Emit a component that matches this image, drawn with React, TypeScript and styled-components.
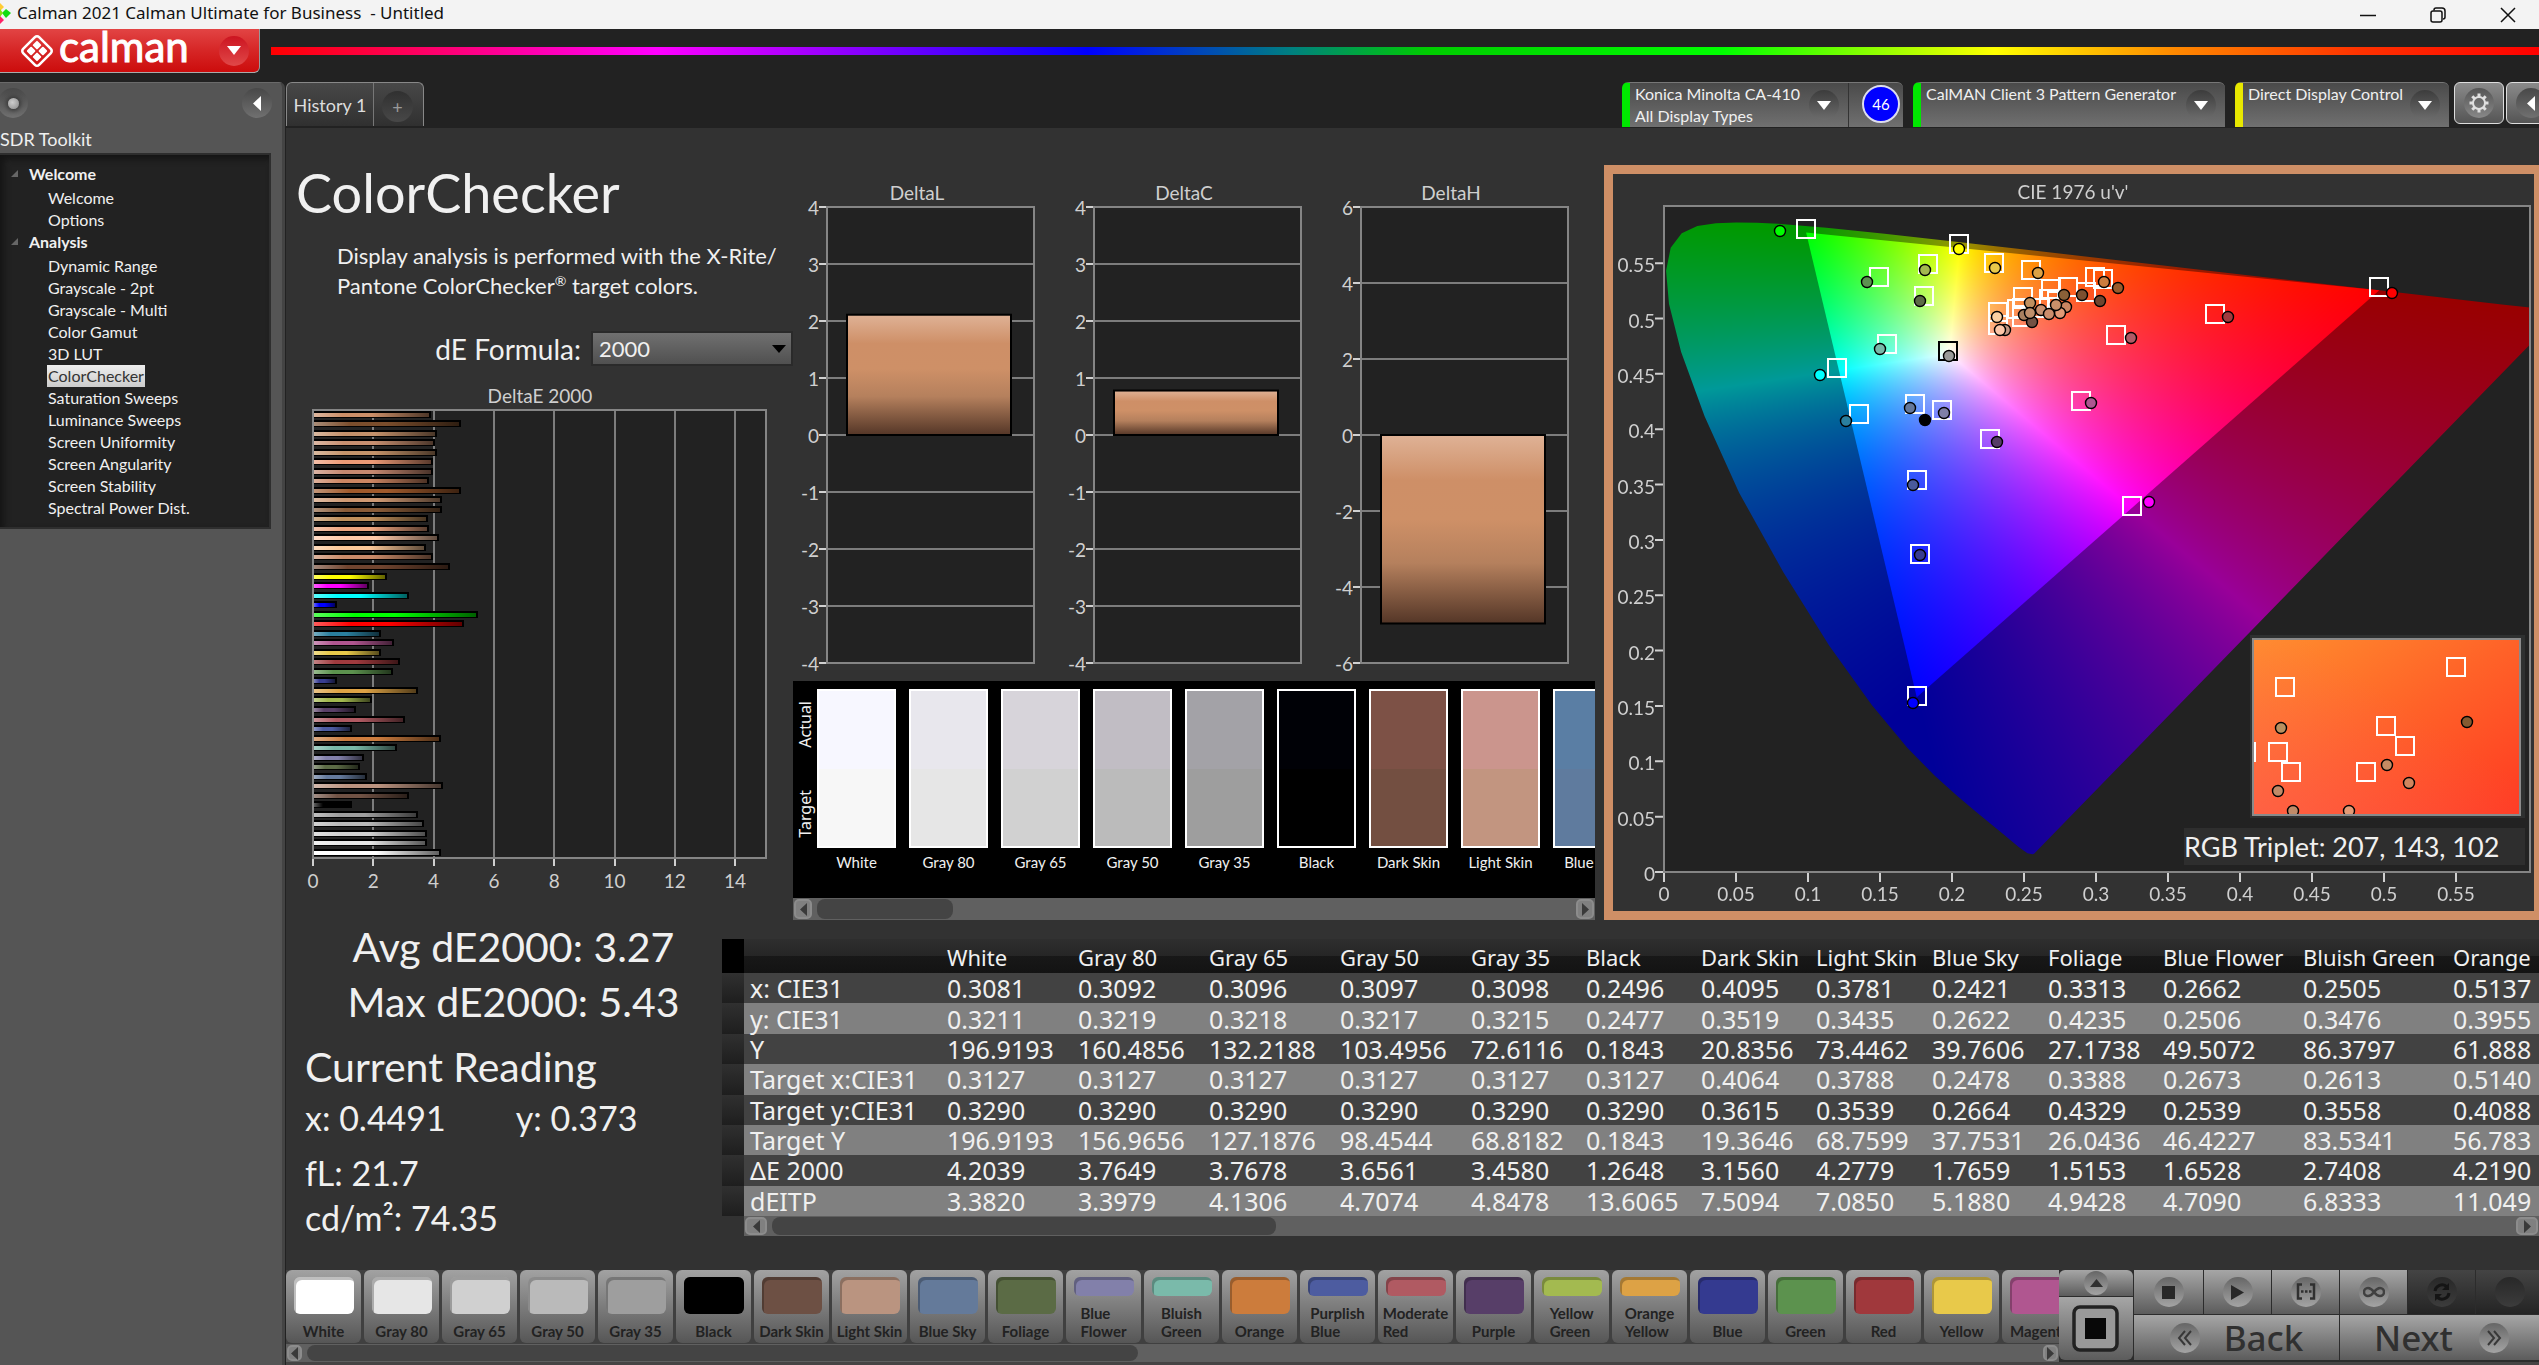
import React, { useLayoutEffect, useRef } from 'react';
import styled, { createGlobalStyle } from 'styled-components';

const UI = 'Lato, "Open Sans", sans-serif';
const WIDE = '"Noto Sans", "Open Sans", sans-serif';

const GlobalStyle = createGlobalStyle`
  *, *::before, *::after { box-sizing: border-box; }
  body { margin: 0; background: #222; color: #f0f0f0; font-family: ${UI}; overflow: hidden; }
  button, select { font-family: inherit; margin: 0; }
  button { padding: 0; cursor: pointer; }
`;

/* ---------- data ---------- */

const NAV = [
  { title: 'Welcome', items: ['Welcome', 'Options'] },
  {
    title: 'Analysis',
    items: [
      'Dynamic Range', 'Grayscale - 2pt', 'Grayscale - Multi', 'Color Gamut', '3D LUT', 'ColorChecker',
      'Saturation Sweeps', 'Luminance Sweeps', 'Screen Uniformity', 'Screen Angularity', 'Screen Stability',
      'Spectral Power Dist.',
    ],
  },
];

const DELTA_E: [number, string][] = [
  [3.88, '#cc8f68'], [4.88, '#7a4d2c'], [4.09, '#c4916b'], [4.02, '#c78f70'], [4.09, '#c4936a'], [3.96, '#ec9a76'],
  [3.96, '#c58870'], [3.83, '#cc8562'], [4.88, '#a05a2c'], [4.25, '#cf9a74'], [4.25, '#8a5c38'], [3.79, '#c0905c'],
  [3.82, '#f0a680'], [4.15, '#ffc9a8'], [3.72, '#fcc898'], [3.96, '#c98a68'], [4.52, '#70442f'], [2.43, '#ffff00'],
  [1.83, '#ff00ff'], [3.16, '#00ffff'], [0.77, '#0000ff'], [5.43, '#00ff00'], [4.98, '#ff0000'], [2.23, '#2a7f9e'],
  [2.66, '#b05690'], [2.23, '#e8c94a'], [2.86, '#a03a3e'], [2.63, '#5c924e'], [0.77, '#383d92'], [3.46, '#dda245'],
  [1.92, '#a3b84f'], [1.4, '#5a4068'], [3.02, '#b05a62'], [1.26, '#4d5ca2'], [4.22, '#cc7c3e'], [2.74, '#78b8a8'],
  [1.65, '#8280aa'], [1.51, '#5c6b46'], [1.76, '#647a9c'], [4.28, '#bc9480'], [3.15, '#705244'], [1.26, '#000000'],
  [3.46, '#9e9e9e'], [3.65, '#bababa'], [3.76, '#d0d0d0'], [3.76, '#e6e6e6'], [4.2, '#ffffff'],
];

const COMPARE: [string, string, string][] = [
  ['White', '#f7f7ff', '#f7f7f7'], ['Gray 80', '#e8e7ed', '#e6e6e6'], ['Gray 65', '#d7d4da', '#d1d1d1'],
  ['Gray 50', '#c1bdc4', '#bbbbbb'], ['Gray 35', '#a3a2a7', '#9e9e9e'], ['Black', '#000106', '#000000'],
  ['Dark Skin', '#7d5146', '#734f41'], ['Light Skin', '#cb958d', '#c29580'], ['Blue Sky', '#5a7ea4', '#5f7b9e'],
];

const COLUMNS: [string, number][] = [
  ['White', 131], ['Gray 80', 131], ['Gray 65', 131], ['Gray 50', 131], ['Gray 35', 115], ['Black', 115],
  ['Dark Skin', 115], ['Light Skin', 116], ['Blue Sky', 116], ['Foliage', 115], ['Blue Flower', 140],
  ['Bluish Green', 150], ['Orange', 120],
];

const ROWS: [string, string][] = [
  ['x: CIE31', '0.3081 0.3092 0.3096 0.3097 0.3098 0.2496 0.4095 0.3781 0.2421 0.3313 0.2662 0.2505 0.5137'],
  ['y: CIE31', '0.3211 0.3219 0.3218 0.3217 0.3215 0.2477 0.3519 0.3435 0.2622 0.4235 0.2506 0.3476 0.3955'],
  ['Y', '196.9193 160.4856 132.2188 103.4956 72.6116 0.1843 20.8356 73.4462 39.7606 27.1738 49.5072 86.3797 61.888'],
  ['Target x:CIE31', '0.3127 0.3127 0.3127 0.3127 0.3127 0.3127 0.4064 0.3788 0.2478 0.3388 0.2673 0.2613 0.5140'],
  ['Target y:CIE31', '0.3290 0.3290 0.3290 0.3290 0.3290 0.3290 0.3615 0.3539 0.2664 0.4329 0.2539 0.3558 0.4088'],
  ['Target Y', '196.9193 156.9656 127.1876 98.4544 68.8182 0.1843 19.3646 68.7599 37.7531 26.0436 46.4227 83.5341 56.783'],
  ['ΔE 2000', '4.2039 3.7649 3.7678 3.6561 3.4580 1.2648 3.1560 4.2779 1.7659 1.5153 1.6528 2.7408 4.2190'],
  ['dEITP', '3.3820 3.3979 4.1306 4.7074 4.8478 13.6065 7.5094 7.0850 5.1880 4.9428 4.7090 6.8333 11.049'],
];

const PALETTE: [string, string, boolean?][] = [
  ['White', '#ffffff'], ['Gray 80', '#e6e6e6'], ['Gray 65', '#d0d0d0'], ['Gray 50', '#bababa'], ['Gray 35', '#9e9e9e'],
  ['Black', '#000000'], ['Dark Skin', '#6d5044'], ['Light Skin', '#ba9480'], ['Blue Sky', '#647a9a'],
  ['Foliage', '#5b6b45'], ['Blue Flower', '#8280aa', true], ['Bluish Green', '#7abaaa', true], ['Orange', '#cc7c3c'],
  ['Purplish Blue', '#4d5ca0', true], ['Moderate Red', '#b05a62', true], ['Purple', '#573e68'],
  ['Yellow Green', '#a3ba50', true], ['Orange Yellow', '#dda245', true], ['Blue', '#343a90'], ['Green', '#5c924e'],
  ['Red', '#a0383c'], ['Yellow', '#e8c94a'], ['Magenta', '#b05690'],
];

/* ---------- CIE chart ---------- */

const CW = 921, CH = 737, PX = 51, PY = 32, PW = 866, PH = 666;
const U = 1441, V = 1107;
const toX = (u: number) => PX + u * U;
const toY = (v: number) => PY + PH - v * V;

const LOCUS = [
  [.1741, .005], [.1733, .0048], [.1714, .0051], [.1689, .0069], [.1644, .0109], [.1566, .0177], [.151, .0227],
  [.144, .0297], [.1355, .0399], [.1241, .0578], [.1096, .0868], [.0913, .1327], [.0687, .2007], [.0454, .295],
  [.0235, .4127], [.0082, .5384], [.0039, .6548], [.0139, .7502], [.0389, .812], [.0743, .8338], [.1142, .8262],
  [.1547, .8059], [.1929, .7816], [.2296, .7543], [.3016, .6923], [.3731, .6245], [.4441, .5547], [.5125, .4866], [.5752, .4242],
  [.627, .3725], [.6658, .334], [.6915, .3083], [.719, .2809], [.7347, .2653],
].map(([x, y]) => {
  const d = -2 * x + 12 * y + 3;
  return [(4 * x) / d, (9 * y) / d];
});
const GAMUT = [[.4964, .5256], [.0986, .5777], [.1754, .1579]];

const TARGETS = [
  [142, 23], [295, 38], [264, 58], [330, 57], [367, 64], [215, 71], [260, 90], [431, 71], [439, 73], [404, 81],
  [387, 83], [422, 86], [359, 91], [385, 93], [393, 95], [334, 106], [334, 119], [353, 103], [358, 102], [358, 111],
  [376, 102], [715, 81], [551, 108], [452, 129], [223, 138], [173, 162], [251, 198], [278, 204], [195, 208],
  [417, 195], [326, 233], [253, 274], [256, 348], [468, 300], [253, 490],
];

const READINGS: [number, number, string][] = [
  [116, 25, '#00ff00'], [295, 43, '#ffff00'], [261, 64, '#a3b84f'], [331, 62, '#e8c94a'], [374, 67, '#dda245'],
  [203, 76, '#5c9250'], [256, 95, '#5c6b46'], [454, 82, '#995a2a'], [440, 76, '#cc7c3e'], [436, 95, '#70452f'],
  [418, 89, '#7d5030'], [402, 101, '#c98562'], [400, 89, '#8a6038'], [396, 107, '#e39a76'], [392, 99, '#c9906a'],
  [377, 104, '#c89070'], [385, 108, '#cc8d6c'], [368, 116, '#735244'], [366, 97, '#c09060'], [360, 109, '#a88060'],
  [366, 107, '#c0906c'], [333, 111, '#fbcfa0'], [341, 124, '#c29682'], [336, 124, '#fcc6a8'], [728, 87, '#ff0000'],
  [564, 111, '#a03a3e'], [467, 132, '#b05a66'], [216, 143, '#78b8a8'], [156, 169, '#00ffff'], [285, 150, '#999999'],
  [246, 202, '#64789a'], [261, 214, '#000000'], [280, 207, '#8080a8'], [182, 215, '#2a7f9e'], [427, 197, '#ad5690'],
  [333, 236, '#563d66'], [249, 279, '#4a5a9c'], [256, 349, '#383d8e'], [485, 296, '#ff00ff'], [249, 497, '#0000ff'],
];

const INSET_TARGETS = [[32, 48], [203, 28], [133, 87], [152, 107], [25, 113], [38, 133], [113, 133], [-7, 113]];
const INSET_READINGS: [number, number, string][] = [
  [28, 89, '#b89060'], [214, 83, '#855a30'], [134, 126, '#c58a62'], [156, 144, '#d0855e'], [25, 152, '#c08a68'],
  [40, 172, '#c08a68'], [96, 172, '#e39a76'],
];

/* The brightest display colour at a chromaticity, in linear drive values. */
function chromaColor(u: number, v: number) {
  const X = (9 * u) / (4 * v);
  const Z = (12 - 3 * u - 20 * v) / (4 * v);
  const lin = [
    Math.max(0, 2.4935 * X - 0.9314 - 0.4027 * Z),
    Math.max(0, -0.8295 * X + 1.7627 + 0.0236 * Z),
    Math.max(0, 0.0358 * X - 0.0762 + 0.9569 * Z),
  ];
  const top = Math.max(...lin);
  return lin.map((c) => (255 * c) / top);
}

function drawGamut(canvas: HTMLCanvasElement) {
  const ctx = canvas.getContext('2d');
  if (!ctx) return;
  ctx.fillStyle = '#222';
  ctx.fillRect(PX, PY, PW, PH);
  const layer = (shape: number[][], dim: number) => {
    const off = document.createElement('canvas');
    off.width = CW;
    off.height = CH;
    const octx = off.getContext('2d')!;
    const img = octx.createImageData(CW, CH);
    for (let y = 0; y < CH; y++) {
      const v = Math.max(0.01, (PY + PH - y) / V);
      for (let x = 0; x < CW; x++) {
        const c = chromaColor((x - PX) / U, v);
        const i = (y * CW + x) * 4;
        img.data[i] = c[0] * dim;
        img.data[i + 1] = c[1] * dim;
        img.data[i + 2] = c[2] * dim;
        img.data[i + 3] = 255;
      }
    }
    octx.putImageData(img, 0, 0);
    ctx.save();
    ctx.beginPath();
    ctx.rect(PX, PY, PW, PH);
    ctx.clip();
    ctx.beginPath();
    shape.forEach(([u, v], i) => (i ? ctx.lineTo(toX(u), toY(v)) : ctx.moveTo(toX(u), toY(v))));
    ctx.closePath();
    ctx.clip();
    ctx.drawImage(off, 0, 0);
    ctx.restore();
  };
  layer(LOCUS, 0.6);
  layer(GAMUT, 1);
}

const CiePanel = styled.section`
  flex: 1;
  min-width: 0;
  margin: 37px 0 0 9px;
  border: 9px solid #cf8f66;
  border-right-width: 5px;
  align-self: flex-start;
`;
const CieStage = styled.div`
  position: relative;
  canvas { display: block; width: 100%; }
  svg { position: absolute; inset: 0; width: 100%; height: 100%; }
`;
const ChartText = styled.text`
  font: 19px ${UI};
  fill: #cfcfcf;
`;
const TripletText = styled.text`
  font: 27px ${UI};
  fill: #f0f0f0;
`;

const Target = ({ x, y, color = '#fff' }: { x: number; y: number; color?: string }) => (
  <rect x={x - 9} y={y - 9} width="18" height="18" fill="none" stroke={color} strokeWidth="2" />
);
const Reading = ({ x, y, color }: { x: number; y: number; color: string }) => (
  <circle cx={x} cy={y} r="5.5" fill={color} stroke="#000" strokeWidth="1.4" />
);

function CieChart() {
  const ref = useRef<HTMLCanvasElement>(null);
  useLayoutEffect(() => {
    if (ref.current) drawGamut(ref.current);
  }, []);
  const steps = Array.from({ length: 12 }, (_, i) => i);
  return (
    <CiePanel>
      <CieStage>
        <canvas ref={ref} width={CW} height={CH} />
        <svg viewBox={`0 0 ${CW} ${CH}`}>
          <defs>
            <linearGradient id="insetFill" x1="0" y1="0" x2="1" y2="1">
              <stop offset="0" stopColor="#ff8f2e" />
              <stop offset="0.5" stopColor="#ff6228" />
              <stop offset="1" stopColor="#ff3a22" />
            </linearGradient>
            <linearGradient id="insetPink" x1="0" y1="1" x2="0.6" y2="0.4">
              <stop offset="0" stopColor="#ff6060" stopOpacity="0.5" />
              <stop offset="1" stopColor="#ff6060" stopOpacity="0" />
            </linearGradient>
            <clipPath id="insetClip"><rect width="267" height="176" /></clipPath>
          </defs>
          <ChartText x={460} y={25} textAnchor="middle">CIE 1976 u'v'</ChartText>
          <rect x={PX} y={PY} width={PW} height={PH} fill="none" stroke="#858585" strokeWidth="2" />
          {steps.map((i) => (
            <g key={i}>
              <path d={`M${PX + i * 72} ${PY + PH + 1}v9M${PX - 1} ${toY(i * 0.05)}h-8`} stroke="#d0d0d0" strokeWidth="2" />
              <ChartText x={PX + i * 72} y={PY + PH + 29} textAnchor="middle">{+(i * 0.05).toFixed(2)}</ChartText>
              <ChartText x={PX - 9} y={toY(i * 0.05) + 9} textAnchor="end">{+(i * 0.05).toFixed(2)}</ChartText>
            </g>
          ))}
          <g transform={`translate(${PX} ${PY})`}>
            {TARGETS.map(([x, y], i) => <Target key={i} x={x} y={y} />)}
            <Target x={284} y={145} color="#000" />
            {READINGS.map(([x, y, c], i) => <Reading key={i} x={x} y={y} color={c} />)}
          </g>
          <rect x="637" y="461" width="275" height="183" fill="#2e3030" />
          <g transform="translate(640 465)">
            <rect width="267" height="176" fill="url(#insetFill)" />
            <rect width="267" height="176" fill="url(#insetPink)" />
            <g clipPath="url(#insetClip)">
              {INSET_TARGETS.map(([x, y], i) => <Target key={i} x={x} y={y} />)}
              {INSET_READINGS.map(([x, y, c], i) => <Reading key={i} x={x} y={y} color={c} />)}
            </g>
            <rect width="267" height="176" fill="none" stroke="#8a8a8a" strokeWidth="2" />
          </g>
          <rect x="571" y="654" width="341" height="37" fill="#2e2e2e" />
          <TripletText x="571" y="683">RGB Triplet: 207, 143, 102</TripletText>
        </svg>
      </CieStage>
    </CiePanel>
  );
}

/* ---------- bar charts ---------- */

const ChartSvg = styled.svg`
  display: block;
  flex: none;
`;

function DeltaEChart() {
  const unit = 30.15;
  const pitch = 448 / DELTA_E.length;
  return (
    <ChartSvg width="500" height="510" viewBox="0 0 500 510">
      <defs>
        <linearGradient id="shine">
          <stop offset="0" stopColor="#fff" stopOpacity="0.36" />
          <stop offset="0.25" stopColor="#fff" stopOpacity="0" />
          <stop offset="0.5" stopColor="#000" stopOpacity="0" />
          <stop offset="1" stopColor="#000" stopOpacity="0.62" />
        </linearGradient>
      </defs>
      <ChartText x="254" y="19" textAnchor="middle">DeltaE 2000</ChartText>
      <rect x="27" y="26" width="453" height="448" fill="#222" />
      {[0, 2, 4, 6, 8, 10, 12, 14].map((n) => (
        <g key={n}>
          <path d={`M${Math.round(27 + n * unit)} 26v448`} stroke="#7d7d7d" strokeWidth="2" />
          <path d={`M${Math.round(27 + n * unit)} 475v7`} stroke="#d0d0d0" strokeWidth="2" />
          <ChartText x={27 + n * unit} y="504" textAnchor="middle">{n}</ChartText>
        </g>
      ))}
      <rect x="27" y="26" width="453" height="448" fill="none" stroke="#858585" strokeWidth="2" />
      {DELTA_E.map(([v, c], i) => {
        const y = Math.round(30.5 + i * pitch);
        const w = Math.round(v * unit);
        return (
          <g key={i}>
            <rect x="28" y={y - 4} width={w} height="7" fill="#000" />
            <rect x="28" y={y - 2} width={w - 2} height="4" fill={c} />
            <rect x="28" y={y - 2} width={w - 2} height="4" fill="url(#shine)" />
          </g>
        );
      })}
    </ChartSvg>
  );
}

function DeltaChart({ title, max, step, value }: { title: string; max: number; step: number; value: number }) {
  const top = 25, h = 456, mid = top + h / 2;
  const k = h / 2 / max;
  const ticks = Array.from({ length: (2 * max) / step + 1 }, (_, i) => max - i * step);
  const y0 = value > 0 ? mid - value * k : mid;
  const bh = Math.abs(value) * k;
  return (
    <ChartSvg width="240" height="492" viewBox="0 0 240 492">
      <defs>
        <linearGradient id="skin" x1="0" y1="0" x2="0" y2="1">
          <stop offset="0" stopColor="#dfb296" />
          <stop offset="0.24" stopColor="#ce8f67" />
          <stop offset="0.45" stopColor="#ce9067" />
          <stop offset="0.68" stopColor="#b5805d" />
          <stop offset="1" stopColor="#543627" />
        </linearGradient>
      </defs>
      <ChartText x="120" y="18" textAnchor="middle">{title}</ChartText>
      <rect x="30" y={top} width="207" height={h} fill="#222" />
      {ticks.map((t) => {
        const y = mid - t * k;
        return (
          <g key={t}>
            <path d={`M30 ${y}h207`} stroke="#7d7d7d" strokeWidth="2" />
            <path d={`M22 ${y}h7`} stroke="#d0d0d0" strokeWidth="2" />
            <ChartText x="22" y={y + 8} textAnchor="end">{t}</ChartText>
          </g>
        );
      })}
      <rect x="30" y={top} width="207" height={h} fill="none" stroke="#858585" strokeWidth="2" />
      <rect x="50" y={y0} width="164" height={bh} fill="url(#skin)" stroke="#000" strokeWidth="2" />
    </ChartSvg>
  );
}

/* ---------- window chrome ---------- */

const Screen = styled.div`
  display: flex;
  flex-direction: column;
  height: 100vh;
  overflow: hidden;
`;
const TitleBar = styled.header`
  display: flex;
  align-items: center;
  flex: none;
  height: 29px;
  background: #f3f3f3;
  color: #111;
`;
const AppMark = styled.svg`
  width: 11px;
  height: 28px;
  margin-right: 6px;
`;
const WindowTitle = styled.h1`
  flex: 1;
  margin: 0 0 4px;
  font: 400 17px/24px ${WIDE};
  white-space: pre;
`;
const WindowButtons = styled.div`
  display: flex;
  margin-right: -4px;
`;
const WindowButton = styled.button`
  display: grid;
  place-items: center;
  width: 70px;
  height: 24px;
  border: 0;
  background: none;
`;
const BrandRow = styled.div`
  display: flex;
  flex: none;
  height: 53px;
`;
const Brand = styled.div`
  display: flex;
  align-items: center;
  width: 260px;
  height: 44px;
  padding-left: 19px;
  background: linear-gradient(#e24444, #d62626 50%, #cc0c0c);
  border-right: 1px solid #999;
  border-bottom: 1px solid #aaa;
  border-bottom-right-radius: 6px;
`;
const BrandName = styled.span`
  flex: 1;
  margin: 0 0 10px 4px;
  font: 42px/44px ${UI};
  color: #fff;
  -webkit-text-stroke: 1px #fff;
`;
const Rainbow = styled.div`
  flex: 1;
  height: 8px;
  margin: 18px 0 0 11px;
  background: linear-gradient(90deg, #f00, #f0f 17%, #00f 36%, #008080 45%, #0c0 51%, #0f0 64%, #ff0 76%, #f80 84%, #f30 92%, #f00);
`;
const RoundButton = styled.button<{ $tone?: string; $right?: number }>`
  display: grid;
  place-items: center;
  flex: none;
  width: 30px;
  height: 30px;
  margin-right: ${(p) => p.$right ?? 0}px;
  border: 0;
  border-radius: 50%;
  background: ${(p) => p.$tone ?? 'linear-gradient(#484848, #707070)'};
`;
const Triangle = ({ dir, color = '#fff', w = 14, h = 9 }: { dir: 'down' | 'left' | 'right' | 'up'; color?: string; w?: number; h?: number }) => {
  const d = {
    down: `M0 0H${w}L${w / 2} ${h}Z`,
    up: `M0 ${h}H${w}L${w / 2} 0Z`,
    left: `M${w} 0V${h}L0 ${h / 2}Z`,
    right: `M0 0V${h}L${w} ${h / 2}Z`,
  }[dir];
  return <svg width={w} height={h} aria-hidden="true"><path d={d} fill={color} /></svg>;
};

/* ---------- body ---------- */

const Body = styled.div`
  display: flex;
  flex: 1;
  min-height: 0;
`;
const Sidebar = styled.aside`
  flex: none;
  width: 285px;
  background: #555;
  border-top: 1px solid #6a6a6a;
  border-right: 3px solid #444;
  border-top-right-radius: 6px;
`;
const SidebarTop = styled.div`
  display: flex;
  justify-content: space-between;
  margin: 5px 10px 9px -2px;
`;
const Knob = styled.span`
  width: 11px;
  height: 11px;
  border-radius: 50%;
  background: radial-gradient(circle at 40% 40%, #ccc, #888);
  box-shadow: 0 0 4px 2px #383838;
`;
const SidebarTitle = styled.h2`
  margin: 0 0 2px;
  font: 400 18px/24px ${UI};
`;
const Tree = styled.nav`
  width: 271px;
  height: 376px;
  padding: 8px 0 0 11px;
  background: #222;
  border: 2px solid #2e2e2e;
  border-left: 0;
  box-shadow: inset 4px 4px 6px #151515;
`;
const GroupTitle = styled.h3`
  display: flex;
  align-items: center;
  gap: 10px;
  margin: 0 0 2px;
  font: 700 16px/22px ${UI};
`;
const GroupList = styled.ul`
  margin: 0;
  padding: 0 0 0 36px;
  list-style: none;
`;
const NavItem = styled.li`
  height: 22px;
`;
const NavLink = styled.a<{ $active: boolean }>`
  display: inline-block;
  padding: 0 1px;
  font: 16px/22px ${UI};
  text-decoration: none;
  color: ${(p) => (p.$active ? '#333' : '#f0f0f0')};
  background: ${(p) => (p.$active ? 'linear-gradient(#eee, #ccc)' : 'none')};
`;

const Main = styled.main`
  display: flex;
  flex: 1;
  flex-direction: column;
  min-width: 0;
  background: #323232;
  border-left: 1px solid #222;
`;
const TabRow = styled.div`
  display: flex;
  flex: none;
  justify-content: space-between;
  height: 46px;
  background: #222;
`;
const Tabs = styled.div`
  display: flex;
  height: 44px;
  border: 1px solid #888;
  border-bottom: 0;
  border-radius: 6px 6px 0 0;
  background: linear-gradient(#484848, #303030);
`;
const Tab = styled.button`
  width: 87px;
  border: 0;
  border-right: 1px solid #777;
  background: none;
  color: #ddd;
  font-size: 18px;
`;
const AddTab = styled.button`
  width: 31px;
  height: 31px;
  margin: 8px 10px 0 8px;
  border: 0;
  border-radius: 50%;
  background: linear-gradient(#303030, #484848);
  color: #999;
  font-size: 18px;
`;
const Devices = styled.div`
  display: flex;
  margin-right: -24px;
`;
const Device = styled.div<{ $w: number; $led: string }>`
  display: flex;
  width: ${(p) => p.$w}px;
  height: 45px;
  margin-right: 10px;
  padding-left: 5px;
  border-top: 1px solid #777;
  border-left: 8px solid ${(p) => p.$led};
  border-radius: 6px 6px 0 0;
  background: linear-gradient(#4a4a4a, #707070);
`;
const DeviceText = styled.p`
  flex: 1;
  margin: 0;
  font: 16px/22px ${UI};
  white-space: nowrap;
`;
const DeviceDrop = styled(RoundButton)`
  margin: 7px 9px 0 -20px;
  background: linear-gradient(#3c3c3c, #6c6c6c);
`;
const Counter = styled.div`
  width: 55px;
  padding: 2px 0 0 13px;
  border-left: 1px solid #333;
`;
const CounterDisc = styled.div`
  display: grid;
  place-items: center;
  width: 38px;
  height: 38px;
  border: 2px solid #dde;
  border-radius: 50%;
  background: #0000ff;
  color: #fff;
  font-size: 15px;
`;
const SquareButton = styled.button`
  display: grid;
  place-items: center;
  width: 50px;
  height: 42px;
  margin-left: -5px;
  margin-right: 7px;
  border: 1px solid #ddd;
  border-radius: 6px;
  background: linear-gradient(#8a8a8a, #555);
`;

const Upper = styled.div`
  display: flex;
  flex: none;
`;
const Intro = styled.section`
  flex: none;
  width: 507px;
  padding-top: 35px;
`;
const PageTitle = styled.h2`
  margin: 0 0 18px 10px;
  font: 400 54px/60px ${UI};
`;
const Lead = styled.p`
  margin: 0 0 30px 51px;
  font: 22px/30px ${UI};
  white-space: nowrap;
`;
const Mark = styled.sup`
  font-size: 14px;
  line-height: 0;
`;
const FormulaRow = styled.div`
  display: flex;
  align-items: center;
  justify-content: flex-end;
  gap: 10px;
  height: 35px;
  margin-bottom: 18px;
`;
const FormulaLabel = styled.label`
  font-size: 28px;
`;
const SelectWrap = styled.span`
  position: relative;
  svg { position: absolute; right: 7px; top: 14px; pointer-events: none; }
`;
const Select = styled.select`
  display: block;
  width: 202px;
  height: 35px;
  padding: 0 6px;
  appearance: none;
  border: 2px solid #2a2a2a;
  border-radius: 0;
  background: linear-gradient(#707070, #505050);
  color: #f0f0f0;
  font-size: 22px;
`;
const Center = styled.section`
  flex: none;
  width: 802px;
  padding-top: 54px;
`;
const DeltaRow = styled.div`
  display: flex;
  gap: 27px;
  padding-left: 4px;
  margin-bottom: 7px;
`;

const Compare = styled.div`
  background: #000;
`;
const CompareView = styled.div`
  display: flex;
  height: 217px;
  padding: 8px 0 0 24px;
  overflow: hidden;
`;
const SideLabels = styled.div`
  display: flex;
  flex: none;
  flex-direction: column;
  justify-content: space-between;
  width: 20px;
  height: 159px;
  margin-left: -22px;
  margin-right: 2px;
  padding: 12px 0 10px;
`;
const SideLabel = styled.span`
  align-self: center;
  writing-mode: vertical-rl;
  rotate: 180deg;
  font: 16px/20px ${WIDE};
`;
const CompareItem = styled.figure`
  display: flex;
  flex: none;
  flex-direction: column;
  align-items: center;
  width: 79px;
  margin: 0 13px 0 0;
`;
const CompareSwatch = styled.div<{ $a: string; $t: string }>`
  width: 79px;
  height: 159px;
  border: 2px solid #fff;
  background: linear-gradient(${(p) => p.$a} 50%, ${(p) => p.$t} 50%);
`;
const CompareName = styled.figcaption`
  margin-top: 4px;
  font: 15px/20px ${UI};
  white-space: nowrap;
`;

const Bar = styled.div<{ $h: number }>`
  display: flex;
  align-items: center;
  gap: 5px;
  height: ${(p) => p.$h}px;
  padding: 1px;
  background: #606060;
`;
const BarTrack = styled.div`
  flex: 1;
  height: 100%;
`;
const BarThumb = styled.div`
  height: 100%;
  border-radius: 8px;
  background: #444;
`;
const BarArrow = styled.button<{ $w: number }>`
  display: grid;
  place-items: center;
  width: ${(p) => p.$w}px;
  height: 100%;
  border: 2px solid #8c8c8c;
  border-radius: 5px;
  background: #808080;
`;

function ScrollBar({ height, size, arrow }: { height: number; size: number; arrow: number }) {
  return (
    <Bar $h={height}>
      <BarArrow $w={arrow} aria-label="Scroll left"><Triangle dir="left" color="#3a3a3a" w={7} h={13} /></BarArrow>
      <BarTrack><BarThumb style={{ width: `${size}%` }} /></BarTrack>
      <BarArrow $w={arrow} aria-label="Scroll right"><Triangle dir="right" color="#3a3a3a" w={7} h={13} /></BarArrow>
    </Bar>
  );
}

const Lower = styled.div`
  display: flex;
  flex: 1;
  min-height: 0;
`;
const Stats = styled.section`
  flex: none;
  width: 436px;
  padding: 3px 0 0 19px;
`;
const StatBig = styled.p`
  margin: 0 0 7px;
  font: 41px/48px ${UI};
  text-align: center;
  white-space: nowrap;
`;
const StatHead = styled.h3`
  margin: 17px 0 4px;
  font: 400 41px/48px ${UI};
`;
const StatLine = styled.p<{ $gap?: number }>`
  display: flex;
  gap: 70px;
  margin: ${(p) => p.$gap ?? 0}px 0 0;
  font: 34px/45px ${UI};
`;
const TableArea = styled.section`
  flex: 1;
  min-width: 0;
  padding-top: 19px;
`;
const TableView = styled.div`
  overflow-x: clip;
`;
const Table = styled.table`
  width: 1845px;
  height: 277px;
  table-layout: fixed;
  border-collapse: collapse;
  font: 25px/28px ${WIDE};
`;
const HeadCell = styled.th`
  height: 34px;
  padding: 2px 0 0 6px;
  font: 400 22px/28px ${WIDE};
  text-align: left;
  white-space: nowrap;
  background: linear-gradient(#2e2e2e, #262626 50%, #181818 50%, #131313);
`;
const Corner = styled.th`
  background: #000;
`;
const Row = styled.tr<{ $alt: boolean }>`
  background: ${(p) => (p.$alt ? '#808080' : '#424242')};
`;
const Grip = styled.td`
  background: linear-gradient(#303030, #1e1e1e);
`;
const RowHead = styled.th`
  padding: 0 0 0 6px;
  font-weight: 400;
  text-align: left;
  white-space: nowrap;
`;
const Cell = styled.td`
  padding: 0 0 0 6px;
  white-space: nowrap;
`;
const TableBar = styled.div`
  margin-left: 22px;
`;

const Dock = styled.footer`
  display: flex;
  flex: none;
  height: 95px;
  border-bottom: 3px solid #464444;
`;
const PaletteArea = styled.div`
  flex: 1;
  min-width: 0;
  background: #404040;
`;
const PaletteView = styled.div`
  display: flex;
  gap: 3px;
  height: 74px;
  overflow: hidden;
`;
const PaletteButton = styled.button`
  display: flex;
  flex: none;
  flex-direction: column;
  align-items: center;
  justify-content: space-between;
  width: 75px;
  height: 73px;
  padding: 7px 0 3px;
  border: 0;
  border-radius: 6px;
  background: linear-gradient(#a2a2a2, #7c7c7c 50%, #565656);
  color: #222;
`;
const Chip = styled.span<{ $c: string; $small?: boolean }>`
  width: 60px;
  height: ${(p) => (p.$small ? 19 : 37)}px;
  border-radius: 6px;
  background: ${(p) => p.$c};
  box-shadow: inset 2px 3px 0 rgba(0, 0, 0, 0.25);
`;
const ChipName = styled.span`
  display: block;
  width: min-content;
  font: 700 15px/18px ${UI};
  text-align: left;
`;
const ChipLine = styled(ChipName)`
  width: auto;
  white-space: nowrap;
`;
const Transport = styled.div`
  display: grid;
  flex: none;
  grid-template-columns: 74px 69px 67px 67px 67px 67px 67px;
  grid-template-rows: 27px 18px 46px;
  column-gap: 1px;
  width: 480px;
  overflow: hidden;
  background: #2c2c2c;
`;
const StepButton = styled.button<{ $col: string; $row: string; $off?: boolean; $round?: string; $gap?: number }>`
  display: flex;
  align-items: center;
  justify-content: center;
  gap: ${(p) => p.$gap ?? 0}px;
  grid-column: ${(p) => p.$col};
  grid-row: ${(p) => p.$row};
  margin-bottom: 1px;
  border: 0;
  border-radius: ${(p) => p.$round ?? '0'};
  background: ${(p) => (p.$off ? 'linear-gradient(#444, #242424)' : 'linear-gradient(#a6a6a6, #5c5c5c)')};
  color: #303030;
  font: 500 35px/44px ${WIDE};
`;
const Disc = styled.span<{ $off?: boolean; $s?: number }>`
  display: grid;
  place-items: center;
  flex: none;
  width: ${(p) => p.$s ?? 30}px;
  height: ${(p) => p.$s ?? 30}px;
  border-radius: 50%;
  background: ${(p) => (p.$off ? 'linear-gradient(#282828, #3c3c3c)' : 'linear-gradient(#666, #a4a4a4)')};
`;

const Gear = () => (
  <svg width="30" height="30" viewBox="0 0 30 30" aria-hidden="true">
    <defs><linearGradient id="gearDisc" x1="0" y1="0" x2="0" y2="1"><stop stopColor="#555" /><stop offset="1" stopColor="#888" /></linearGradient></defs>
    <circle cx="15" cy="15" r="15" fill="url(#gearDisc)" />
    <circle cx="15" cy="15" r="6" fill="none" stroke="#e0e0e0" strokeWidth="2" />
    {Array.from({ length: 8 }, (_, i) => (
      <path key={i} d="M15 9V5.5" stroke="#e0e0e0" strokeWidth="3" transform={`rotate(${i * 45} 15 15)`} />
    ))}
  </svg>
);

const CalmanMark = () => (
  <svg width="36" height="36" viewBox="-18 -18 36 36" aria-hidden="true">
    <g transform="scale(0.98) rotate(45)" fill="none">
      <rect x="-11.5" y="-11.5" width="23" height="23" rx="3" stroke="#fff" strokeWidth="2.6" />
      {[-7.6, 0.9].map((x) => [-7.6, 0.9].map((y) => (
        <rect key={`${x}${y}`} x={x} y={y} width="6.7" height="6.7" rx="1" fill="#fff" />
      )))}
    </g>
  </svg>
);

export default function App() {
  return (
    <Screen>
      <GlobalStyle />
      <TitleBar>
        <AppMark viewBox="0 0 11 28">
          <path d="M-3 6L0 2L4 6L0 10Z" fill="#fc3" />
          <path d="M2 12L6 8L11 12L6 17Z" fill="#1d1" />
          <path d="M-4 12L0 8L3 12L0 16Z" fill="#8d1" />
          <path d="M-3 19L0 15L4 19L0 23Z" fill="#f26" />
        </AppMark>
        <WindowTitle>Calman 2021 Calman Ultimate for Business  - Untitled</WindowTitle>
        <WindowButtons>
          <WindowButton aria-label="Minimize"><svg width="16" height="16"><path d="M0 8.5h16" stroke="#111" strokeWidth="1.5" /></svg></WindowButton>
          <WindowButton aria-label="Restore">
            <svg width="16" height="16" fill="none" stroke="#111" strokeWidth="1.5">
              <rect x="1" y="4" width="11" height="11" rx="2" /><path d="M4 3.5V3a2 2 0 0 1 2-2h6a3 3 0 0 1 3 3v6a2 2 0 0 1-2 2" />
            </svg>
          </WindowButton>
          <WindowButton aria-label="Close"><svg width="16" height="16"><path d="M1 1l14 14M15 1L1 15" stroke="#111" strokeWidth="1.5" /></svg></WindowButton>
        </WindowButtons>
      </TitleBar>

      <BrandRow>
        <Brand>
          <CalmanMark />
          <BrandName>calman</BrandName>
          <RoundButton aria-label="Menu" $tone="linear-gradient(#cc1420, #e04848)" $right={10}><Triangle dir="down" /></RoundButton>
        </Brand>
        <Rainbow />
      </BrandRow>

      <Body>
        <Sidebar>
          <SidebarTop>
            <RoundButton as="span"><Knob /></RoundButton>
            <RoundButton aria-label="Collapse"><Triangle dir="left" w={8} h={15} /></RoundButton>
          </SidebarTop>
          <SidebarTitle>SDR Toolkit</SidebarTitle>
          <Tree>
            {NAV.map((g) => (
              <React.Fragment key={g.title}>
                <GroupTitle>
                  <svg width="8" height="8" aria-hidden="true"><path d="M7 0V7H0Z" fill="#666" /></svg>
                  {g.title}
                </GroupTitle>
                <GroupList>
                  {g.items.map((t) => (
                    <NavItem key={t}><NavLink href="#" $active={t === 'ColorChecker'}>{t}</NavLink></NavItem>
                  ))}
                </GroupList>
              </React.Fragment>
            ))}
          </Tree>
        </Sidebar>

        <Main>
          <TabRow>
            <Tabs>
              <Tab>History 1</Tab>
              <AddTab>+</AddTab>
            </Tabs>
            <Devices>
              <Device $w={281} $led="#00e800">
                <DeviceText>Konica Minolta CA-410<br />All Display Types</DeviceText>
                <DeviceDrop aria-label="Meter menu"><Triangle dir="down" /></DeviceDrop>
                <Counter><CounterDisc>46</CounterDisc></Counter>
              </Device>
              <Device $w={312} $led="#00e800">
                <DeviceText>CalMAN Client 3 Pattern Generator</DeviceText>
                <DeviceDrop aria-label="Source menu"><Triangle dir="down" /></DeviceDrop>
              </Device>
              <Device $w={214} $led="#e8e800">
                <DeviceText>Direct Display Control</DeviceText>
                <DeviceDrop aria-label="Display menu"><Triangle dir="down" /></DeviceDrop>
              </Device>
              <SquareButton aria-label="Settings"><Gear /></SquareButton>
              <SquareButton aria-label="Collapse devices">
                <RoundButton as="span"><Triangle dir="left" w={8} h={15} /></RoundButton>
              </SquareButton>
            </Devices>
          </TabRow>

          <Upper>
            <Intro>
              <PageTitle>ColorChecker</PageTitle>
              <Lead>Display analysis is performed with the X-Rite/<br />Pantone ColorChecker<Mark>®</Mark> target colors.</Lead>
              <FormulaRow>
                <FormulaLabel htmlFor="formula">dE Formula:</FormulaLabel>
                <SelectWrap>
                  <Select id="formula" defaultValue="2000"><option>2000</option></Select>
                  <Triangle dir="down" color="#000" w={14} h={8} />
                </SelectWrap>
              </FormulaRow>
              <DeltaEChart />
            </Intro>
            <Center>
              <DeltaRow>
                <DeltaChart title="DeltaL" max={4} step={1} value={2.11} />
                <DeltaChart title="DeltaC" max={4} step={1} value={0.78} />
                <DeltaChart title="DeltaH" max={6} step={2} value={-4.96} />
              </DeltaRow>
              <Compare>
                <CompareView>
                  <SideLabels><SideLabel>Actual</SideLabel><SideLabel>Target</SideLabel></SideLabels>
                  {COMPARE.map(([n, a, t]) => (
                    <CompareItem key={n}>
                      <CompareSwatch $a={a} $t={t} />
                      <CompareName>{n}</CompareName>
                    </CompareItem>
                  ))}
                </CompareView>
                <ScrollBar height={22} size={18} arrow={18} />
              </Compare>
            </Center>
            <CieChart />
          </Upper>

          <Lower>
            <Stats>
              <StatBig>Avg dE2000: 3.27</StatBig>
              <StatBig>Max dE2000: 5.43</StatBig>
              <StatHead>Current Reading</StatHead>
              <StatLine><span>x: 0.4491</span><span>y: 0.373</span></StatLine>
              <StatLine $gap={10}>fL: 21.7</StatLine>
              <StatLine>cd/m²: 74.35</StatLine>
            </Stats>
            <TableArea>
              <TableView>
                <Table>
                  <colgroup>
                    <col width={22} /><col width={197} />
                    {COLUMNS.map(([n, w]) => <col key={n} width={w} />)}
                  </colgroup>
                  <thead>
                    <tr><Corner /><HeadCell />{COLUMNS.map(([n]) => <HeadCell key={n}>{n}</HeadCell>)}</tr>
                  </thead>
                  <tbody>
                    {ROWS.map(([name, values], i) => (
                      <Row key={name} $alt={i % 2 === 1}>
                        <Grip />
                        <RowHead>{name}</RowHead>
                        {values.split(' ').map((v, j) => <Cell key={j}>{v}</Cell>)}
                      </Row>
                    ))}
                  </tbody>
                </Table>
              </TableView>
              <TableBar><ScrollBar height={20} size={29} arrow={22} /></TableBar>
            </TableArea>
          </Lower>

          <Dock>
            <PaletteArea>
              <PaletteView>
                {PALETTE.map(([n, c, small]) => (
                  <PaletteButton key={n}>
                    <Chip $c={c} $small={small} />
                    {small ? <ChipName>{n}</ChipName> : <ChipLine>{n}</ChipLine>}
                  </PaletteButton>
                ))}
              </PaletteView>
              <ScrollBar height={18} size={48} arrow={15} />
            </PaletteArea>
            <Transport>
              <StepButton $col="1" $row="1" $round="6px 6px 0 0" aria-label="Up"><Disc $s={24}><Triangle dir="up" color="#303030" w={13} h={8} /></Disc></StepButton>
              <StepButton $col="1" $row="2 / 4" $round="0 0 6px 6px" aria-label="Pattern">
                <svg width="48" height="48" aria-hidden="true">
                  <rect x="2" y="2" width="43" height="43" rx="6" fill="#999" stroke="#222" strokeWidth="3.5" />
                  <rect x="13" y="13" width="21" height="21" fill="#080808" />
                </svg>
              </StepButton>
              <StepButton $col="2" $row="1 / 3" aria-label="Stop"><Disc><svg width="13" height="13"><rect width="13" height="13" fill="#282828" /></svg></Disc></StepButton>
              <StepButton $col="3" $row="1 / 3" aria-label="Play"><Disc><Triangle dir="right" color="#282828" w={13} h={15} /></Disc></StepButton>
              <StepButton $col="4" $row="1 / 3" aria-label="Series">
                <Disc>
                  <svg width="20" height="18" fill="none" stroke="#303030" strokeWidth="2.5">
                    <path d="M6 1.5H2v14h4M14 1.5h4v14h-4M5 8.5h2.5M9 8.5h2.5M13 8.5h2.5" />
                  </svg>
                </Disc>
              </StepButton>
              <StepButton $col="5" $row="1 / 3" aria-label="Continuous">
                <Disc>
                  <svg width="22" height="12" fill="none" stroke="#404040" strokeWidth="2.5">
                    <path d="M11 6C8 2 6.5 2 5 2a4 4 0 0 0 0 8c1.5 0 3 0 6-4s4.5-4 6-4a4 4 0 0 1 0 8c-1.5 0-3 0-6-4Z" />
                  </svg>
                </Disc>
              </StepButton>
              <StepButton $col="6" $row="1 / 3" $off aria-label="Refresh">
                <Disc $off>
                  <svg width="20" height="20" viewBox="0 0 20 20" fill="none" stroke="#151515" strokeWidth="3">
                    <path d="M3 9a7 7 0 0 1 11.5-4.5M17 11a7 7 0 0 1-11.5 4.5" />
                    <path d="M17 1v7h-7zM3 19v-7h7z" fill="#151515" stroke="none" />
                  </svg>
                </Disc>
              </StepButton>
              <StepButton $col="7" $row="1 / 3" $off aria-label="Record"><Disc $off /></StepButton>
              <StepButton $col="2 / 5" $row="3" $gap={24}>
                <Disc>
                  <svg width="16" height="16" fill="none" stroke="#383838" strokeWidth="2"><path d="M8 1L2 8l6 7M14 1L8 8l6 7" /></svg>
                </Disc>
                Back
              </StepButton>
              <StepButton $col="5 / 8" $row="3" $gap={26}>
                Next
                <Disc>
                  <svg width="16" height="16" fill="none" stroke="#383838" strokeWidth="2"><path d="M2 1l6 7-6 7M8 1l6 7-6 7" /></svg>
                </Disc>
              </StepButton>
            </Transport>
          </Dock>
        </Main>
      </Body>
    </Screen>
  );
}
